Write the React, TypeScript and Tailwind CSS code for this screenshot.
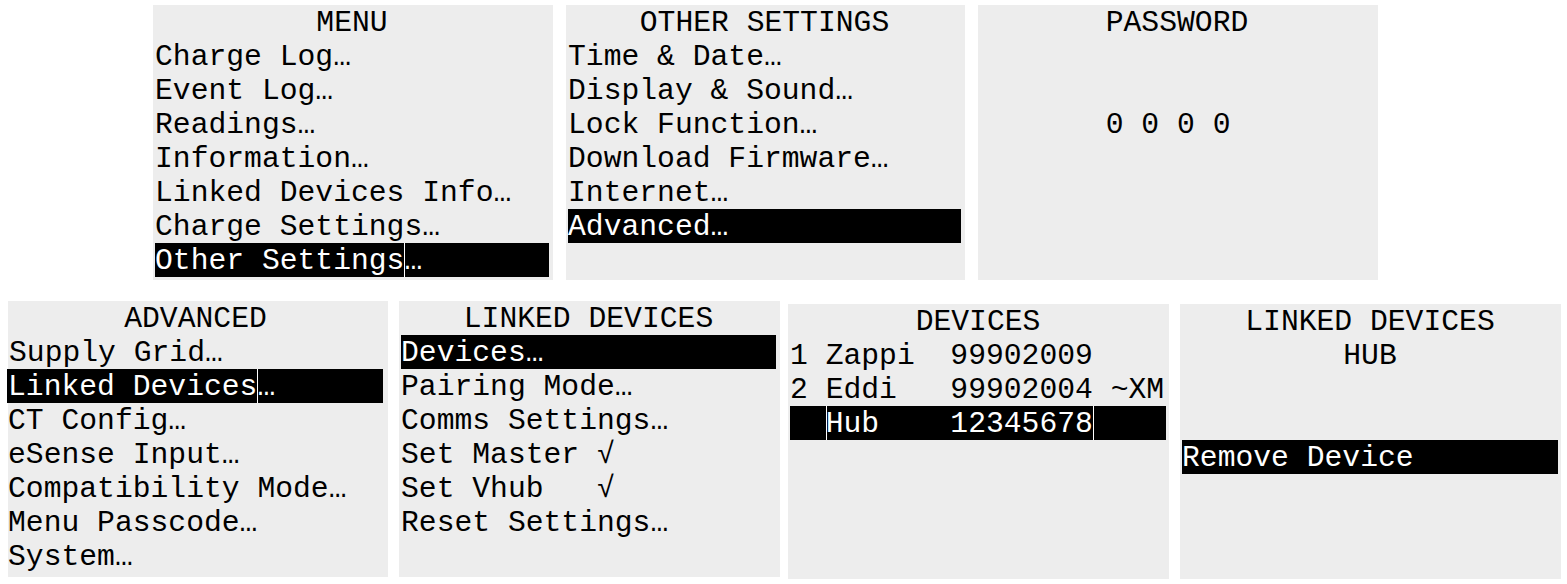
import { ReactNode } from "react";

// one LCD-style screen of the menu walkthrough
function Screen({ className, children }: { className: string; children: ReactNode }) {
  return <div className={`shrink-0 bg-[#ededed] ${className}`}>{children}</div>;
}

function Title({ children }: { children: ReactNode }) {
  return <div className="h-[34px] pt-px text-center whitespace-pre">{children}</div>;
}

function Line({ children }: { children?: ReactNode }) {
  return <div className="h-[34px] pt-px whitespace-pre">{children ?? "\u00a0"}</div>;
}

function Selected({ children, className = "" }: { children: ReactNode; className?: string }) {
  return (
    <div className={`flex h-[34px] whitespace-pre bg-black text-white ${className}`}>{children}</div>
  );
}

// thin white seam the device draws between cells of a selected row
const seam = "shadow-[inset_1px_0_0_#ffffff]";

export default function App() {
  return (
    <div className="min-h-screen bg-white pt-[5px] font-['Courier_New','Liberation_Mono',monospace] text-[29.7px] leading-[34px] text-black">
      <div className="flex">
        <Screen className="ml-[153px] h-[275px] w-[400px] pl-[2px] pr-[4px]">
          <Title>MENU</Title>
          <Line>Charge Log…</Line>
          <Line>Event Log…</Line>
          <Line>Readings…</Line>
          <Line>Information…</Line>
          <Line>Linked Devices Info…</Line>
          <Line>Charge Settings…</Line>
          <Selected>
            <span className="pt-px">Other Settings</span>
            <span className={`flex-1 pt-px ${seam}`}>…</span>
          </Selected>
        </Screen>

        <Screen className="ml-[13px] h-[275px] w-[399px] pl-[2px] pr-[4px]">
          <Title>OTHER SETTINGS</Title>
          <Line>Time &amp; Date…</Line>
          <Line>Display &amp; Sound…</Line>
          <Line>Lock Function…</Line>
          <Line>Download Firmware…</Line>
          <Line>Internet…</Line>
          <Selected className="pt-px">Advanced…</Selected>
        </Screen>

        <Screen className="ml-[13px] h-[275px] w-[400px] pl-[2px] pr-[4px]">
          <Title>PASSWORD</Title>
          <Line />
          <Line />
          <Title>{"0 0 0 0\u00a0"}</Title>
        </Screen>
      </div>

      <div className="mt-[21px] flex items-start">
        <Screen className="ml-[8px] h-[276px] w-[380px] pr-[5px]">
          <Title>ADVANCED</Title>
          <div className="pl-px">
            <Line>Supply Grid…</Line>
          </div>
          <Selected className="-ml-px pl-px">
            <span className="pt-px">Linked Devices</span>
            <span className={`flex-1 pt-px ${seam}`}>…</span>
          </Selected>
          <Line>CT Config…</Line>
          <Line>eSense Input…</Line>
          <Line>Compatibility Mode…</Line>
          <Line>Menu Passcode…</Line>
          <Line>System…</Line>
        </Screen>

        <Screen className="ml-[11px] h-[276px] w-[381px] pl-[2px] pr-[4px]">
          <Title>LINKED DEVICES</Title>
          <Selected className="pt-px">Devices…</Selected>
          <Line>Pairing Mode…</Line>
          <Line>Comms Settings…</Line>
          <Line>Set Master √</Line>
          <Line>Set Vhub   √</Line>
          <Line>Reset Settings…</Line>
        </Screen>

        <Screen className="ml-[8px] mt-[3px] h-[275px] w-[381px] pl-[2px] pr-[3px]">
          <Title>DEVICES</Title>
          <Line>1 Zappi  99902009</Line>
          <Line>2 Eddi   99902004 ~XM</Line>
          <Selected>
            <span className="pt-px">{"  "}</span>
            <span className={`pt-px ${seam}`}>{"Hub    12345678"}</span>
            <span className={`flex-1 pt-px ${seam}`}> </span>
          </Selected>
        </Screen>

        <Screen className="ml-[11px] mt-[3px] h-[275px] w-[381px] pl-[2px] pr-[3px]">
          <Title>LINKED DEVICES</Title>
          <Title>HUB</Title>
          <Line />
          <Line />
          <Selected className="pt-px">Remove Device</Selected>
        </Screen>
      </div>
    </div>
  );
}
